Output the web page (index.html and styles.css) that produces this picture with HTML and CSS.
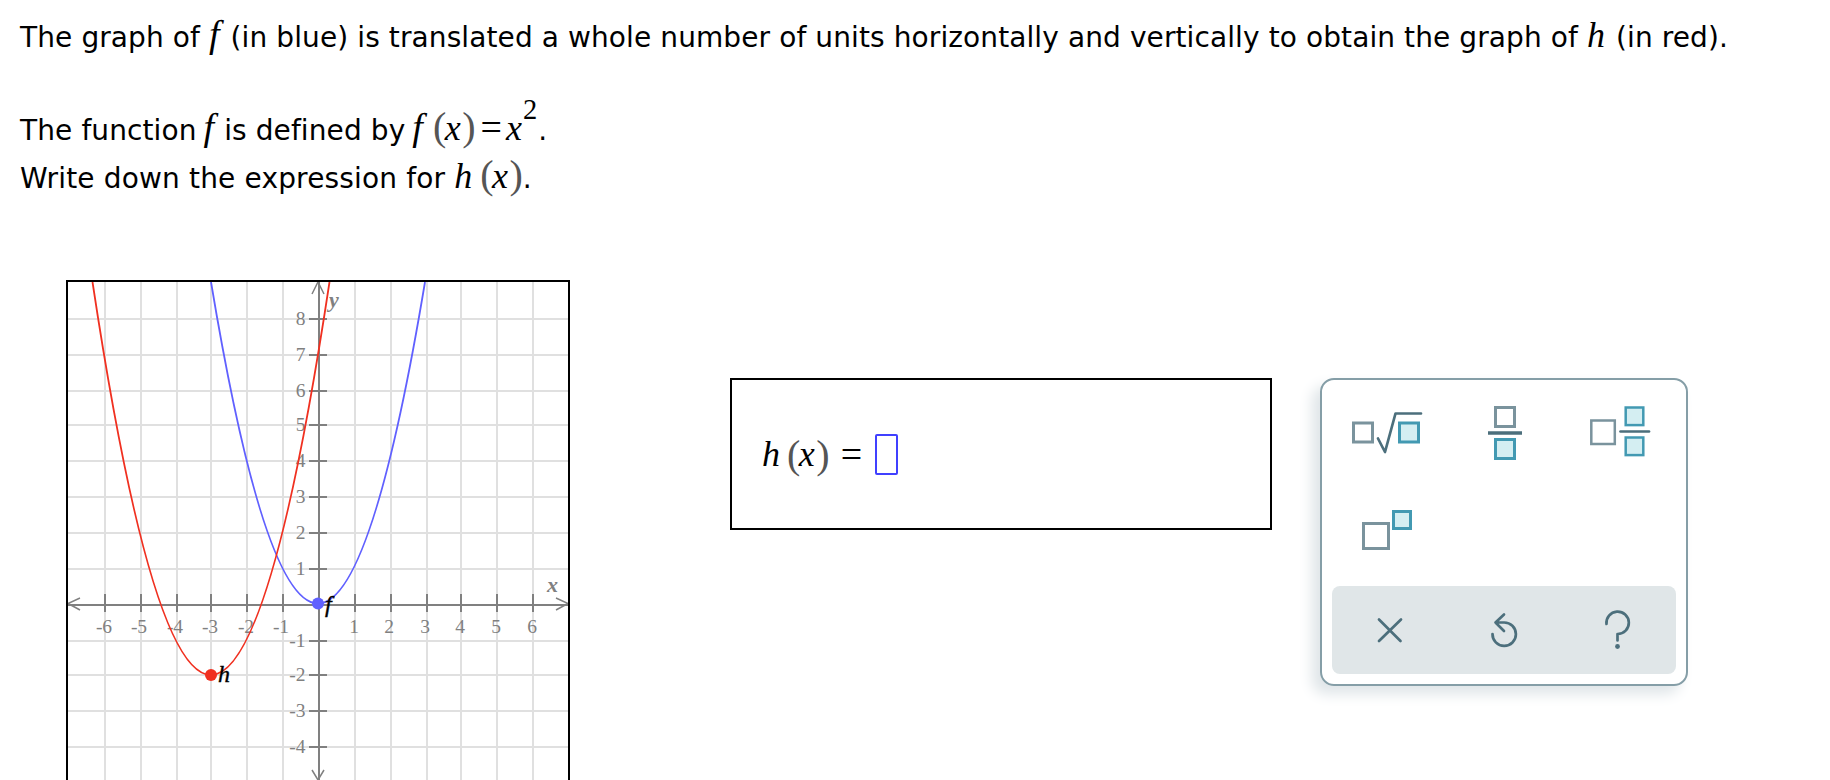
FILE: index.html
```html
<!DOCTYPE html>
<html lang="en">
<head>
    <meta charset="UTF-8">
    <title>Translating a parabola</title>
    <link rel="stylesheet" href="styles.css">
</head>
<body>
    <div class="question">
        <p class="line line-intro"><span>The graph of</span><i class="fn-f">f</i><span class="intro-text">(in blue) is translated a whole number of units horizontally and vertically to obtain the graph of</span><i class="fn-h">h</i><span class="intro-end">(in red).</span></p>
        <p class="line line-def"><span class="def-start">The function</span><i class="fn-f">f</i><span class="def-text">is defined by</span><i class="fn-f">f</i><span class="paren">(</span><i class="arg">x</i><span class="paren">)</span><span class="equals">=</span><i>x</i><sup>2</sup><span class="stop">.</span></p>
        <p class="line line-task"><span class="task-text">Write down the expression for</span><i class="fn-h">h</i><span class="paren">(</span><i class="arg">x</i><span class="paren">)</span><span class="stop">.</span></p>
    </div>

    <div class="workspace">
        <svg class="graph" width="504" height="500" viewBox="0 0 504 500">
            <path class="grid" d="M39 2V500M75 2V500M111 2V500M145 2V500M181 2V500M217 2V500M289 2V500M325 2V500M361 2V500M395 2V500M431 2V500M467 2V500M2 39H502M2 75H502M2 111H502M2 145H502M2 181H502M2 217H502M2 253H502M2 289H502M2 361H502M2 395H502M2 431H502M2 467H502"/>
            <g class="labels labels-x">
                <text x="38" y="353">-6</text>
                <text x="73" y="353">-5</text>
                <text x="109" y="353">-4</text>
                <text x="144" y="353">-3</text>
                <text x="180" y="353">-2</text>
                <text x="215" y="353">-1</text>
                <text x="288" y="353">1</text>
                <text x="323" y="353">2</text>
                <text x="359" y="353">3</text>
                <text x="394" y="353">4</text>
                <text x="430" y="353">5</text>
                <text x="466" y="353">6</text>
            </g>
            <g class="labels labels-y">
                <text x="239.500" y="45">8</text>
                <text x="239.500" y="81">7</text>
                <text x="239.500" y="117">6</text>
                <text x="239.500" y="151">5</text>
                <text x="239.500" y="187">4</text>
                <text x="239.500" y="223">3</text>
                <text x="239.500" y="259">2</text>
                <text x="239.500" y="295">1</text>
                <text x="239.500" y="367">-1</text>
                <text x="239.500" y="401">-2</text>
                <text x="239.500" y="437">-3</text>
                <text x="239.500" y="473">-4</text>
            </g>
            <path class="axis" d="M253 2V500M2 325H502M39 314V332M75 314V332M111 314V332M145 314V332M181 314V332M217 314V332M289 314V332M325 314V332M361 314V332M395 314V332M431 314V332M467 314V332M243 39H261M243 75H261M243 111H261M243 145H261M243 181H261M243 217H261M243 253H261M243 289H261M243 361H261M243 395H261M243 431H261M243 467H261"/>
            <path class="arrow" d="M14 318L2 323.500L14 330M490 318L502 323.500L490 330M246 14L252 2L258 14M246 490L252 500L258 490"/>
            <text class="axis-name" x="481" y="312">x</text>
            <text class="axis-name" x="263" y="27">y</text>
            <path class="curve-f" d="M145 2Q252 645 359 2"/>
            <path class="curve-h" d="M26.500 2Q145 788 263.500 2"/>
            <circle class="point-f" cx="252" cy="323.500" r="6"/>
            <circle class="point-h" cx="145" cy="395" r="6"/>
            <text class="curve-name" x="259" y="332">f</text>
            <text class="curve-name" x="152" y="402">h</text>
            <path class="frame" d="M1 500V1H503V500"/>
        </svg>

        <div class="answer">
            <i class="fn-h">h</i><span class="paren">(</span><i class="arg">x</i><span class="paren">)</span><span class="equals">=</span><span class="blank"></span>
        </div>

        <div class="keypad">
            <div class="keys">
                <svg width="80" height="60">
                    <rect class="box" x="4.500" y="20" width="19" height="19"/>
                    <path class="stroke" d="M29 35.500L36 49L46.500 10.500H72"/>
                    <rect class="box fill" x="50.500" y="20" width="19" height="19"/>
                </svg>
                <svg width="80" height="60">
                    <rect class="box" x="31.500" y="4.500" width="19" height="19"/>
                    <path class="stroke bar" d="M24 30H58"/>
                    <rect class="box fill" x="31.500" y="36.500" width="19" height="19"/>
                </svg>
                <svg width="80" height="60">
                    <rect class="box thin" x="12.300" y="17.500" width="23.500" height="23.500"/>
                    <rect class="box fill thin" x="46.700" y="4.500" width="17.600" height="17.600"/>
                    <path class="stroke" d="M41.500 28.500H70"/>
                    <rect class="box fill thin" x="46.700" y="34.500" width="17.600" height="17.600"/>
                </svg>
                <svg width="80" height="60">
                    <rect class="box" x="14.500" y="23.500" width="25" height="25"/>
                    <rect class="box fill" x="44.500" y="11.500" width="17" height="17"/>
                </svg>
            </div>
            <div class="actions">
                <svg width="80" height="60"><path class="stroke" d="M30 19.500L51.500 41M52 19.500L30 41"/></svg>
                <svg width="80" height="60"><path class="stroke" d="M28.500 34A11.700 11.700 0 1 0 40 22.500H31.500M40 14.500L31.500 22.500L40 31"/></svg>
                <svg width="80" height="60">
                    <path class="stroke" d="M27.500 24A11.200 11.200 0 1 1 38.500 34V40.500"/>
                    <circle class="dot" cx="38.500" cy="46.500" r="2.400"/>
                </svg>
            </div>
        </div>
    </div>
</body>
</html>
```
FILE: styles.css
```css
* {
    box-sizing: border-box;
}

body {
    margin: 0;
    height: 780px;
    overflow: hidden;
    background-color: #fff;
    color: #000;
    font-family: Verdana, 'DejaVu Sans', sans-serif;
    font-size: 28px;
}

.question {
    height: 280px;
    padding: 10px 20px 0;
}

.line {
    display: flex;
    align-items: baseline;
    height: 48px;
    margin: 0;
    line-height: 48px;
    letter-spacing: 0.1px;
    white-space: pre;
}

.line-def {
    margin-top: 45px;
}

.line-task {
    letter-spacing: 0.16px;
}

i, .paren, .equals, sup {
    font-family: 'Liberation Serif', serif;
    font-size: 36px;
    letter-spacing: 0;
}

.paren {
    font-size: 40px;
    color: #555;
}

.arg {
    margin: 0 1.5px 0 -1.5px;
}

.equals {
    margin: 0 4px 0 5px;
    font-size: 38px;
}

.fn-f {
    margin: 0 10px 0 7px;
    font-size: 38px;
}

.line-intro .fn-f {
    margin: 0 11px 0 9px;
}

.fn-h {
    margin: 0 8px 0 9px;
}

.line-intro .fn-h {
    margin-right: 11px;
}

sup {
    position: relative;
    top: -21px;
    margin: 0 1px;
    font-size: 28.5px;
    line-height: 1;
}

.workspace {
    display: flex;
    align-items: flex-start;
    padding-left: 66px;
}

.graph {
    display: block;
    flex: none;
    fill: none;
    font-family: 'Liberation Serif', serif;
}

.grid {
    stroke: #e0e0e0;
    stroke-width: 2;
}

.axis {
    stroke: #808080;
    stroke-width: 2;
}

.arrow {
    stroke: #808080;
    stroke-width: 1.5;
}

.labels {
    fill: #808080;
    font-size: 19.5px;
}

.labels-x {
    text-anchor: middle;
}

.labels-y {
    text-anchor: end;
}

.axis-name {
    fill: #808080;
    font-size: 22px;
    font-style: italic;
    font-weight: bold;
}

.curve-f {
    stroke: #6060ff;
    stroke-width: 1.8;
}

.curve-h {
    stroke: #f03020;
    stroke-width: 1.8;
}

.point-f {
    fill: #6060ff;
}

.point-h {
    fill: #f03020;
}

.curve-name {
    fill: #000;
    stroke: #000;
    stroke-width: 0.4;
    font-size: 24px;
    font-style: italic;
}

.frame {
    stroke: #000;
    stroke-width: 2;
}

.answer {
    display: flex;
    align-items: center;
    width: 542px;
    height: 152px;
    margin: 98px 0 0 160px;
    padding-left: 30px;
    border: 2px solid #000;
}

.answer .fn-h {
    margin: 0 7px 0 0;
}

.answer .equals {
    margin: 0 13px 0 11px;
}

.blank {
    width: 23px;
    height: 41px;
    border: 2px solid #4040ff;
    border-radius: 2px;
}

.keypad {
    width: 368px;
    height: 308px;
    margin: 98px 0 0 48px;
    padding: 0 10px;
    border: 2px solid #859ea7;
    border-radius: 14px;
    box-shadow: -8px 8px 14px #dfe5e8;
}

.keys, .actions {
    display: grid;
    grid-template-columns: 114px 116px 114px;
    justify-items: center;
}

.keys {
    height: 206px;
    padding-top: 23px;
    grid-auto-rows: 60px;
    row-gap: 37px;
}

.actions {
    height: 88px;
    padding-top: 14px;
    border-radius: 8px;
    background-color: #e0e6e8;
}

.box {
    fill: none;
    stroke: #7a939d;
    stroke-width: 3;
}

.fill {
    fill: #d4eef2;
    stroke: #4299b2;
}

.thin {
    stroke-width: 2.5;
}

.stroke {
    fill: none;
    stroke: #4c6f7c;
    stroke-width: 2.7;
    stroke-linecap: round;
    stroke-linejoin: round;
}

.bar {
    stroke-width: 3.5;
    stroke-linecap: butt;
}

.dot {
    fill: #4c6f7c;
}
```
